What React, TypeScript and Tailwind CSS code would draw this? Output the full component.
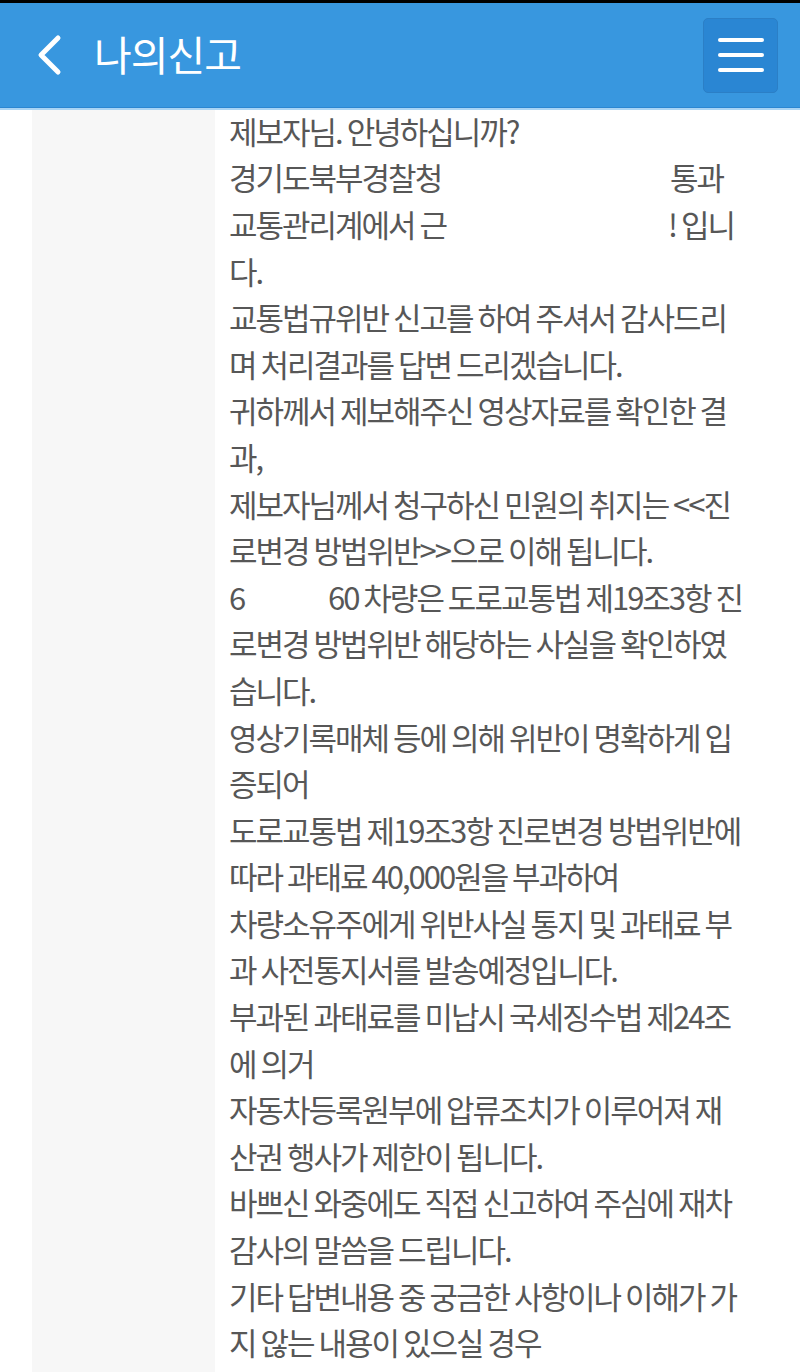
import React from 'react';

type Line = { text: string; gap?: number; rest?: string };

const LINES: Line[] = [
  { text: '제보자님. 안녕하십니까?' },
  { text: '경기도북부경찰청', gap: 441, rest: '통과' },
  { text: '교통관리계에서 근', gap: 439, rest: '! 입니' },
  { text: '다.' },
  { text: '교통법규위반 신고를 하여 주셔서 감사드리' },
  { text: '며 처리결과를 답변 드리겠습니다.' },
  { text: '귀하께서 제보해주신 영상자료를 확인한 결' },
  { text: '과,' },
  { text: '제보자님께서 청구하신 민원의 취지는 <<진' },
  { text: '로변경 방법위반>>으로 이해 됩니다.' },
  { text: '6', gap: 99, rest: '60 차량은 도로교통법 제19조3항 진' },
  { text: '로변경 방법위반 해당하는 사실을 확인하였' },
  { text: '습니다.' },
  { text: '영상기록매체 등에 의해 위반이 명확하게 입' },
  { text: '증되어' },
  { text: '도로교통법 제19조3항 진로변경 방법위반에' },
  { text: '따라 과태료 40,000원을 부과하여' },
  { text: '차량소유주에게 위반사실 통지 및 과태료 부' },
  { text: '과 사전통지서를 발송예정입니다.' },
  { text: '부과된 과태료를 미납시 국세징수법 제24조' },
  { text: '에 의거' },
  { text: '자동차등록원부에 압류조치가 이루어져 재' },
  { text: '산권 행사가 제한이 됩니다.' },
  { text: '바쁘신 와중에도 직접 신고하여 주심에 재차' },
  { text: '감사의 말씀을 드립니다.' },
  { text: '기타 답변내용 중 궁금한 사항이나 이해가 가' },
  { text: '지 않는 내용이 있으실 경우' },
];

function Header() {
  return (
    <div className="border-t-[3px] border-black">
      <div className="flex h-[105px] items-center justify-between bg-[#3897df] pl-[35px] pr-[22px] border-b border-[#2b86d1]">
        <div className="flex items-center gap-[31px]">
          <svg width="28" height="42" viewBox="0 0 28 42" fill="none">
            <path d="M23 4 L6 21 L23 38" stroke="white" strokeWidth="5" strokeLinecap="round" strokeLinejoin="round" />
          </svg>
          <span className="text-[41px] tracking-[-1px] text-white leading-none pb-[4px]">나의신고</span>
        </div>
        <button className="flex h-[75px] w-[75px] flex-col items-center justify-center gap-[11px] rounded-[5px] bg-[#2a86d3] border border-[#2b7fc6]">
          <span className="block h-[4px] w-[46px] rounded-full bg-white" />
          <span className="block h-[4px] w-[46px] rounded-full bg-white" />
          <span className="block h-[4px] w-[46px] rounded-full bg-white" />
        </button>
      </div>
      <div className="h-[2px] bg-[#a9d4f4]" />
    </div>
  );
}

export default function App() {
  return (
    <div
      className="h-[1372px] w-[800px] overflow-hidden bg-white"
      style={{ fontFamily: '"Noto Sans CJK KR", "Noto Sans", sans-serif' }}
    >
      <Header />
      <div className="flex h-full">
        <div className="ml-[32px] w-[183px] shrink-0 bg-[#f7f7f7]" />
        <div className="-mt-[3px] pl-[14px] text-[31px] tracking-[-2px] text-[#575757]">
          {LINES.map((line, i) => (
            <div key={i} className="flex h-[46.6px] items-center whitespace-nowrap leading-none">
              {line.gap ? (
                <>
                  <span className="shrink-0" style={{ width: line.gap }}>{line.text}</span>
                  <span>{line.rest}</span>
                </>
              ) : (
                <span>{line.text}</span>
              )}
            </div>
          ))}
        </div>
      </div>
    </div>
  );
}
